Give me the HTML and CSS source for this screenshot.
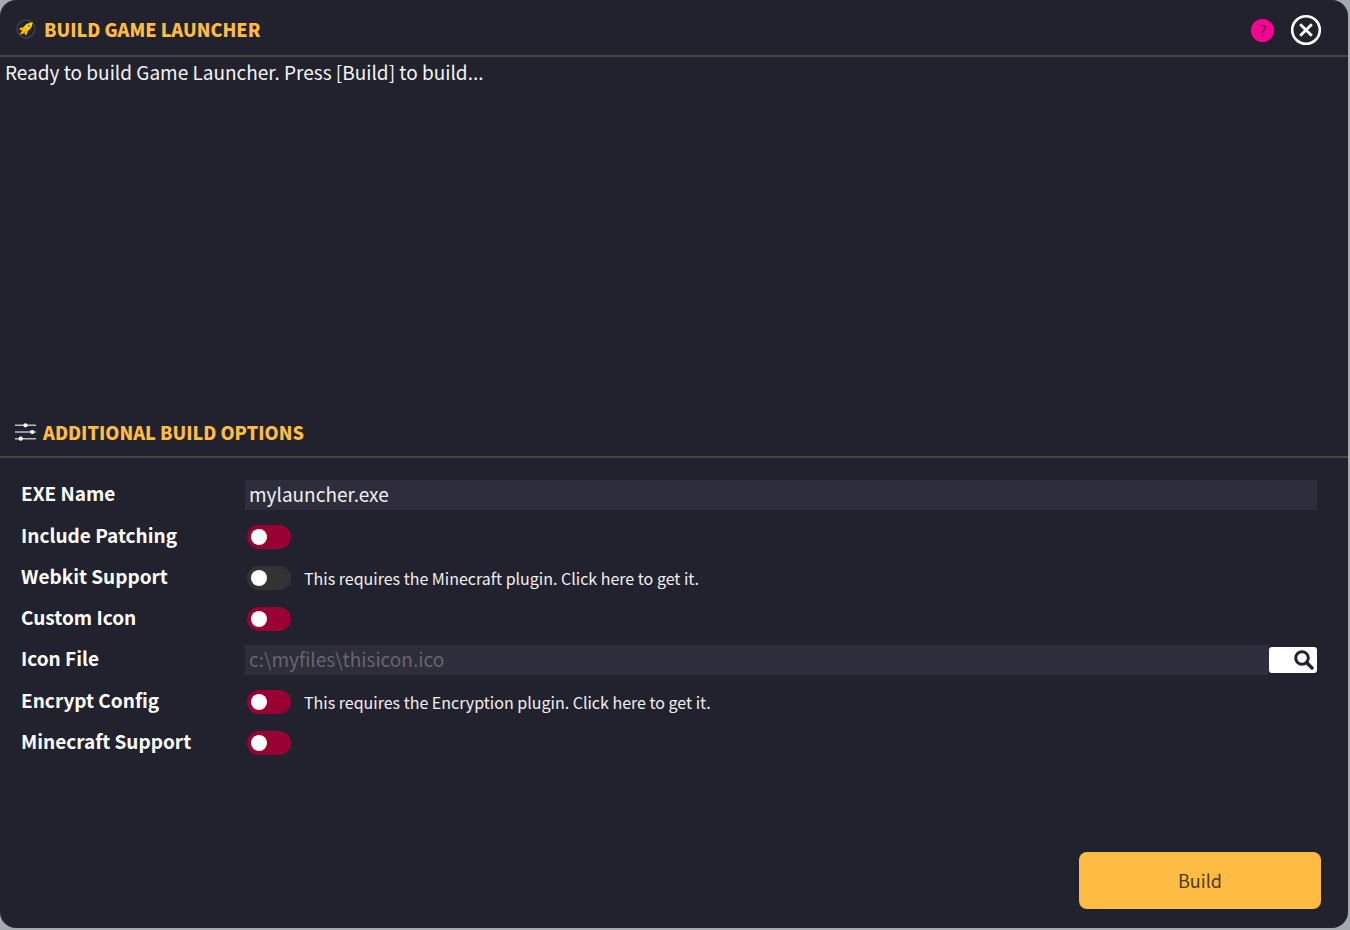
FILE: index.html
```
<!DOCTYPE html>
<html lang="en">
<head>
    <meta charset="UTF-8">
    <meta name="viewport" content="width=device-width, initial-scale=1.0">
    <title>Build Game Launcher</title>
    <link rel="stylesheet" href="styles.css">
</head>
<body>
    <main class="window">
        <header class="title-bar">
            <svg class="rocket-icon" viewBox="0 0 20 20" aria-hidden="true">
                <circle cx="10" cy="10" r="9" fill="#20242f" stroke="#3b4250" stroke-width="1.4"/>
                <path d="M16.5 3.5 C12 3.6 9 5.6 7.3 8.2 L4.3 8.8 L3.2 11 L6 11 L5.4 12.6 L3.6 15.8 L7.2 14.4 L8.8 13.8 L9 16.4 L11.2 15 L11.7 12 C14.5 10 16.3 7.4 16.5 3.5 Z" fill="#ffb400"/>
                <path d="M16.5 3.5 C12.6 3.6 10 5.2 8.2 7.6 L12.2 11.4 C14.8 9.4 16.3 7 16.5 3.5 Z" fill="#f2d414"/>
                <circle cx="12.8" cy="7.1" r="1" fill="#8a7410"/>
            </svg>
            <h1>BUILD GAME LAUNCHER</h1>
            <div class="window-buttons">
                <button class="help-button" type="button" aria-label="Help">?</button>
                <button class="close-button" type="button" aria-label="Close">
                    <svg viewBox="0 0 32 32" aria-hidden="true">
                        <circle cx="16" cy="16" r="13.8" fill="none" stroke="#fff" stroke-width="2.6"/>
                        <path d="M10.2 10.2 L21.8 21.8 M21.8 10.2 L10.2 21.8" stroke="#fff" stroke-width="2.8"/>
                    </svg>
                </button>
            </div>
        </header>

        <section class="build-log">
            <p>Ready to build Game Launcher. Press [Build] to build...</p>
        </section>

        <div class="options-bar">
            <svg class="sliders-icon" viewBox="0 0 24 20" aria-hidden="true">
                <path d="M1 3 H23 M1 10 H23 M1 17 H23" stroke="#b9b9c0" stroke-width="1.6"/>
                <circle cx="12" cy="3" r="2.2" fill="#fff"/>
                <circle cx="19" cy="10" r="2.2" fill="#fff"/>
                <circle cx="7" cy="17" r="2.2" fill="#fff"/>
            </svg>
            <h2>ADDITIONAL BUILD OPTIONS</h2>
        </div>

        <form class="options">
            <div class="option-row field-row">
                <label for="exe-name">EXE Name</label>
                <input class="text-field" type="text" id="exe-name" value="mylauncher.exe">
            </div>
            <div class="option-row">
                <label for="patching">Include Patching</label>
                <input class="toggle" type="checkbox" id="patching" checked>
            </div>
            <div class="option-row">
                <label for="webkit">Webkit Support</label>
                <input class="toggle" type="checkbox" id="webkit">
                <a class="plugin-link" href="#">This requires the Minecraft plugin. Click here to get it.</a>
            </div>
            <div class="option-row">
                <label for="custom-icon">Custom Icon</label>
                <input class="toggle" type="checkbox" id="custom-icon" checked>
            </div>
            <div class="option-row field-row">
                <label for="icon-file">Icon File</label>
                <input class="text-field" type="text" id="icon-file" placeholder="c:\myfiles\thisicon.ico">
                <button class="browse-button" type="button" aria-label="Browse">
                    <svg viewBox="0 0 20 20" aria-hidden="true">
                        <circle cx="8" cy="8" r="6.3" fill="none" stroke="#22222e" stroke-width="3"/>
                        <path d="M12.5 12.5 L18 18" stroke="#22222e" stroke-width="3.4" stroke-linecap="round"/>
                    </svg>
                </button>
            </div>
            <div class="option-row">
                <label for="encrypt">Encrypt Config</label>
                <input class="toggle" type="checkbox" id="encrypt" checked>
                <a class="plugin-link" href="#">This requires the Encryption plugin. Click here to get it.</a>
            </div>
            <div class="option-row">
                <label for="minecraft">Minecraft Support</label>
                <input class="toggle" type="checkbox" id="minecraft" checked>
            </div>
        </form>

        <footer>
            <button class="build-button" type="button">Build</button>
        </footer>
    </main>
</body>
</html>
```

FILE: styles.css
```
* {
    box-sizing: border-box;
}

body {
    margin: 0;
    padding: 0 2px 2px 0;
    min-height: 100vh;
    display: flex;
    background: #a4a9ad;
    color: #f4f4f4;
    font-family: "Noto Sans CJK SC", "Noto Sans", sans-serif;
    font-size: 19px;
}

h1, h2, p {
    margin: 0;
}

h1, h2 {
    color: #ffbc42; /* Amber headings */
    font-size: 18px;
    font-weight: 900;
    line-height: 28px;
}

button, input {
    font-family: inherit;
}

button {
    padding: 0;
    border: none;
    cursor: pointer;
}

.window {
    flex: 1;
    display: flex;
    flex-direction: column;
    background: #22222e;
    border-radius: 16px;
    overflow: hidden;
}

.title-bar {
    display: flex;
    align-items: center;
    gap: 8px;
    height: 57px;
    padding: 2px 26px 0 16px;
    border-bottom: 2px solid #454546;
}

.rocket-icon {
    width: 20px;
    height: 20px;
}

.window-buttons {
    display: flex;
    align-items: center;
    gap: 16px;
    margin-left: auto;
    padding-top: 3px;
}

.help-button {
    width: 23px;
    height: 23px;
    border-radius: 50%;
    background: #ff0095; /* Hot pink */
    color: #5c1044;
    font-size: 16px;
    line-height: 23px;
}

.close-button {
    width: 32px;
    height: 32px;
    background: none;
}

.close-button svg {
    display: block;
}

.build-log {
    flex: 1;
    padding: 0 5px;
    line-height: 30px;
}

.options-bar {
    display: flex;
    align-items: center;
    gap: 6px;
    height: 50px;
    padding: 0 14px;
    border-bottom: 2px solid #454546;
}

.sliders-icon {
    width: 23px;
    height: 20px;
}

.options {
    padding: 16px 31px 0 21px;
}

.option-row {
    display: flex;
    align-items: center;
    height: 41px;
}

.field-row {
    height: 42px;
}

.option-row label {
    width: 224px;
    padding-bottom: 4px;
    color: #fff;
    font-weight: bold;
    line-height: 28px;
}

.text-field {
    flex: 1;
    height: 30px;
    padding: 0 4px 3px;
    border: none;
    background: #2e2d3b;
    color: #f0f0f0;
    font-size: 19px;
}

.text-field::placeholder {
    color: #66666b;
}

.toggle {
    appearance: none;
    width: 44px;
    height: 24px;
    margin: 0 13px 0 2px;
    padding: 4px;
    border-radius: 12px;
    background: #333;
    cursor: pointer;
}

.toggle:checked {
    background: #990033; /* Crimson when on */
}

.toggle::before {
    content: "";
    display: block;
    width: 16px;
    height: 16px;
    border-radius: 50%;
    background: #fff;
}

.plugin-link {
    color: #f0f0f0;
    font-size: 16px;
    text-decoration: none;
}

.browse-button {
    display: flex;
    align-items: center;
    justify-content: flex-end;
    width: 48px;
    height: 26px;
    padding-right: 3px;
    border-radius: 3px;
    background: #fff;
}

.browse-button svg {
    width: 20px;
    height: 20px;
}

footer {
    display: flex;
    justify-content: flex-end;
    padding: 89px 27px 19px;
}

.build-button {
    width: 242px;
    height: 57px;
    padding-bottom: 2px;
    border-radius: 8px;
    background: #ffbc42;
    color: #4d3a1c;
    font-size: 18px;
}
```
